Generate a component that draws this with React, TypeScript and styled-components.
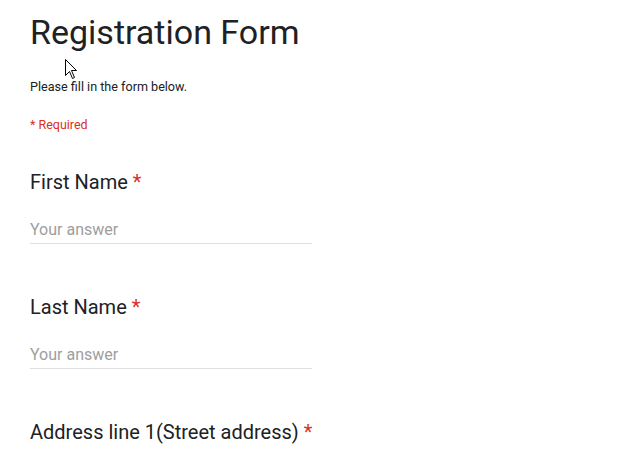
import React from 'react';
import styled, { createGlobalStyle } from 'styled-components';

const GlobalStyle = createGlobalStyle`
    html, body {
        margin: 0;
        padding: 0;
        background: #ffffff;
    }
    body {
        font-family: Roboto, "Noto Sans", Arial, sans-serif;
        color: #202124;
    }
`

const Page = styled.div`
    position: relative;
    padding: 11px 30px 0;
    height: 456px;
    overflow: hidden;
    box-sizing: border-box;
`

const Title = styled.h1`
    margin: 0;
    font-size: 34px;
    font-weight: 400;
    line-height: 42px;
    color: #202124;
`

const Description = styled.p`
    margin: 26px 0 0;
    font-size: 12.6px;
    line-height: 16px;
    color: #202124;
`

const RequiredNote = styled.div`
    margin-top: 22px;
    font-size: 12.5px;
    line-height: 16px;
    color: #d93025;
`

const Question = styled.div`
    margin-top: ${(p: { first?: boolean }) => (p.first ? '37px' : '51px')};
    width: 282px;
`

const Label = styled.div`
    font-size: 20px;
    line-height: 24px;
    color: #202124;
    white-space: nowrap;
`

const Star = styled.span`
    color: #d93025;
`

const AnswerInput = styled.input`
    display: block;
    margin-top: 25px;
    width: 100%;
    box-sizing: border-box;
    border: none;
    border-bottom: 1px solid #e0e0e0;
    padding: 0 0 4px;
    font-family: Roboto, "Noto Sans", Arial, sans-serif;
    font-size: 16px;
    line-height: 20px;
    height: 25px;
    color: #202124;
    outline: none;
    background: transparent;

    &::placeholder {
        color: #9e9e9e;
    }
`

const Cursor = styled.svg`
    position: absolute;
    left: 65px;
    top: 59px;
`

const questions = ['First Name', 'Last Name', 'Address line 1(Street address)']

export default function App() {
    return (
        <>
            <GlobalStyle />
            <Page>
                <Title>Registration Form</Title>
                <Description>Please fill in the form below.</Description>
                <RequiredNote>* Required</RequiredNote>

                {questions.map((q, i) =>
                    <Question key={q} first={i === 0}>
                        <Label>
                            {q} <Star>*</Star>
                        </Label>
                        {i < 2 && <AnswerInput placeholder="Your answer" />}
                    </Question>
                )}

                <Cursor width="13" height="21" viewBox="0 0 13 21">
                    <path d="M0.5 0.5 L0.5 16.5 L4.5 12.5 L7.5 19.5 L9.5 18.5 L6.5 11.5 L11.5 11.5 Z"
                        fill="#ffffff" stroke="#000000" strokeWidth="1" />
                </Cursor>
            </Page>
        </>
    )
}
